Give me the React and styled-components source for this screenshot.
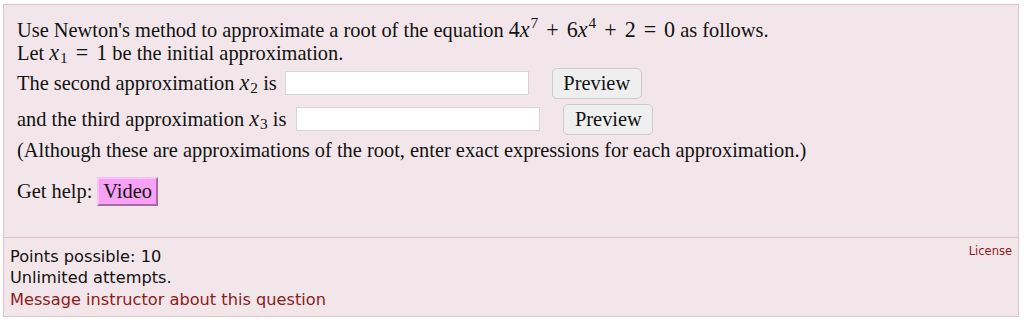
import React from "react";
import styled, { createGlobalStyle } from "styled-components";

const GlobalStyle = createGlobalStyle`
  html, body {
    margin: 0;
    padding: 0;
    background: #ffffff;
  }
`;

const Page = styled.div`
  width: 1016px;
  padding: 4px 0 0 3px;
`;

const QuestionBox = styled.div`
  background: #f3e6ea;
  border: 1px solid #e0c3c6;
  padding: 14px 13px 31px 13px;
  font-family: "Liberation Serif", "Times New Roman", serif;
  font-size: 20.4px;
  color: #111;
`;

const Line = styled.div`
  height: 23px;
  line-height: 23px;
  white-space: nowrap;
  margin-top: ${(p) => p.$top || 0}px;
`;

const Row = styled.div`
  display: flex;
  align-items: center;
  height: 30px;
  white-space: nowrap;
  margin-top: ${(p) => p.$top || 0}px;
`;

const Label = styled.span`
  line-height: 23px;
`;

const Math = styled.span`
  font-family: "Liberation Serif", serif;
  font-size: 1.08em;
  line-height: 1;
`;

const Var = styled.i`
  font-style: italic;
  padding-right: 1px;
`;

const Sub = styled.span`
  font-size: 70%;
  vertical-align: -3px;
  line-height: 0;
`;

const Sup = styled.span`
  font-size: 70%;
  vertical-align: 9px;
  line-height: 0;
`;

const Op = styled.span`
  padding: 0 8px;
`;

const AnswerInput = styled.input`
  box-sizing: border-box;
  width: 244px;
  height: 24px;
  margin-left: ${(p) => p.$left || 8}px;
  border: 1px solid #d6d6d6;
  background: #ffffff;
  outline: none;
`;

const PreviewButton = styled.button`
  box-sizing: border-box;
  width: 90px;
  height: 31px;
  margin-left: 23px;
  border: 1px solid #cbcbcb;
  border-radius: 5px;
  background: #efefef;
  font-family: "Liberation Serif", "Times New Roman", serif;
  font-size: 20.4px;
  color: #111;
  padding: 0;
`;

const HelpLabel = styled.span`
  margin-right: 5px;
`;

const VideoButton = styled.button`
  box-sizing: border-box;
  height: 29px;
  padding: 0 4px;
  border: 2px solid;
  border-top-color: #f7c2f5;
  border-left-color: #f7c2f5;
  border-bottom-color: #a56aa3;
  border-right-color: #a56aa3;
  background: #f7a0f4;
  font-family: "Liberation Serif", "Times New Roman", serif;
  font-size: 20.4px;
  color: #111;
`;

const Footer = styled.div`
  position: relative;
  background: #f3e6ea;
  border: 1px solid #e0c3c6;
  border-top: none;
  padding: 8px 6px 6px 6px;
  font-family: "DejaVu Sans", Verdana, sans-serif;
  font-size: 16.2px;
  line-height: 21.3px;
  color: #111;
`;

const FooterLine = styled.div`
  color: ${(p) => (p.$link ? "#8f1a1a" : "#111")};
`;

const License = styled.a`
  position: absolute;
  top: 3px;
  right: 6px;
  font-family: "DejaVu Sans", Verdana, sans-serif;
  font-size: 11.5px;
  line-height: 21.5px;
  color: #8f1a1a;
  text-decoration: none;
`;

export default function App() {
  return (
    <Page>
      <GlobalStyle />
      <QuestionBox>
        <Line>
          Use Newton's method to approximate a root of the equation{" "}
          <Math>
            4<Var>x</Var>
            <Sup>7</Sup>
            <Op>+</Op>6<Var>x</Var>
            <Sup>4</Sup>
            <Op>+</Op>2<Op>=</Op>0
          </Math>{" "}
          as follows.
        </Line>
        <Line>
          Let{" "}
          <Math>
            <Var>x</Var>
            <Sub>1</Sub>
            <Op>=</Op>1
          </Math>{" "}
          be the initial approximation.
        </Line>
        <Row $top={3}>
          <Label>
            The second approximation{" "}
            <Math>
              <Var>x</Var>
              <Sub>2</Sub>
            </Math>{" "}
            is
          </Label>
          <AnswerInput type="text" />
          <PreviewButton>Preview</PreviewButton>
        </Row>
        <Row $top={6}>
          <Label>
            and the third approximation{" "}
            <Math>
              <Var>x</Var>
              <Sub>3</Sub>
            </Math>{" "}
            is
          </Label>
          <AnswerInput type="text" $left={10} />
          <PreviewButton>Preview</PreviewButton>
        </Row>
        <Line $top={5}>
          (Although these are approximations of the root, enter exact expressions for each approximation.)
        </Line>
        <Row $top={14}>
          <HelpLabel>Get help:</HelpLabel>
          <VideoButton>Video</VideoButton>
        </Row>
      </QuestionBox>
      <Footer>
        <License href="#">License</License>
        <FooterLine>Points possible: 10</FooterLine>
        <FooterLine>Unlimited attempts.</FooterLine>
        <FooterLine $link>Message instructor about this question</FooterLine>
      </Footer>
    </Page>
  );
}
